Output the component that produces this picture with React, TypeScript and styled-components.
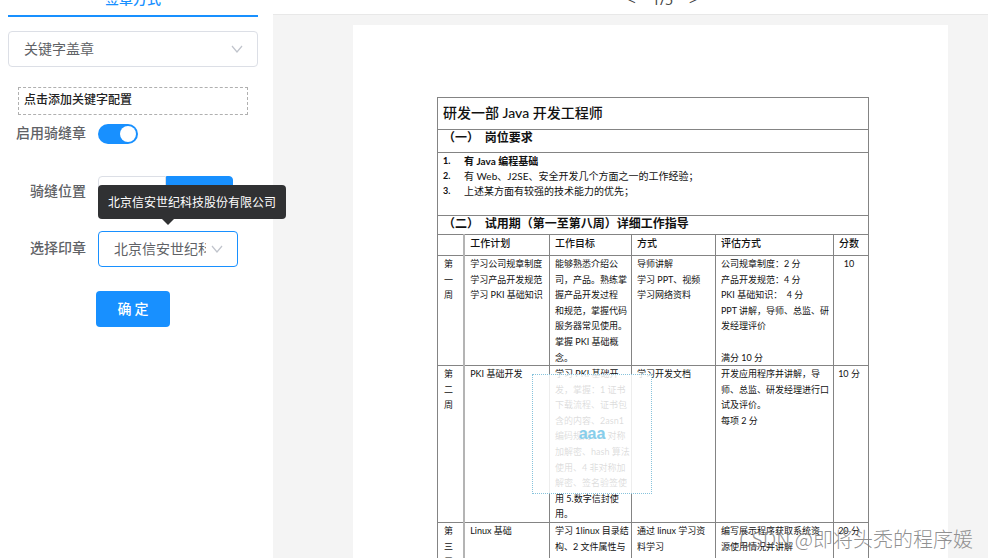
import React from 'react';
import styled, { createGlobalStyle, css } from 'styled-components';

const ui = '"Noto Sans", "Noto Sans CJK SC", sans-serif';
const cjk = '"Noto Sans CJK SC", sans-serif';
const doc = 'Lato, "Noto Sans CJK SC", sans-serif';
const blue = '#1890ff';

const GlobalStyle = createGlobalStyle`
  * { box-sizing: border-box; }
  body { margin: 0; background: #fff; font-family: ${ui}; }
  button, input, select { font-family: inherit; }
`;

const Shell = styled.div`
  position: relative;
  display: flex;
  height: 100vh;
  overflow: hidden;
`;

const Sidebar = styled.aside`
  flex: none;
  width: 273px;
  padding: 0 15px 0 8px;
  font-family: ${cjk};
`;

const TabBar = styled.div`
  display: flex;
  height: 17px;
  align-items: flex-end;
  border-bottom: 2px solid ${blue};
`;

const Tab = styled.button`
  flex: 1;
  height: 26px;
  padding: 0 0 8px;
  border: 0;
  background: none;
  color: ${blue};
  font-size: 14px;
  font-weight: 500;
  line-height: 18px;
`;

const SelectBox = styled.div<{ $active?: boolean }>`
  display: flex;
  align-items: center;
  gap: 5px;
  height: 36px;
  padding: 0 14px 0 15px;
  border: 1px solid ${(p) => (p.$active ? blue : '#dcdfe6')};
  border-radius: 4px;
  background: #fff;
`;

const Select = styled.select`
  flex: 1;
  min-width: 0;
  padding: 0 0 2px;
  border: 0;
  outline: 0;
  appearance: none;
  background: none;
  color: #606266;
  font-size: 14px;
  line-height: 20px;
  overflow: hidden;
  text-overflow: clip;
`;

const Form = styled.form`
  display: flex;
  flex-direction: column;
  padding-top: 14px;
`;

const KeywordButton = styled.button`
  height: 28px;
  margin: 20px 10px 0;
  padding: 0 5px 4px;
  border: 1px dashed #b0b0b0;
  background: #fff;
  color: #222;
  font-size: 12px;
  font-weight: 500;
  line-height: 18px;
  text-align: left;
`;

const Field = styled.div<{ $gap: number }>`
  display: flex;
  align-items: center;
  height: 36px;
  margin-top: ${(p) => p.$gap}px;
`;

const Label = styled.label`
  width: 78px;
  margin-right: 12px;
  padding-bottom: 4px;
  color: #606266;
  font-size: 14px;
  font-weight: 500;
  line-height: 20px;
  text-align: right;
`;

const Switch = styled.input`
  display: flex;
  width: 40px;
  height: 20px;
  margin: 0;
  padding: 2px;
  appearance: none;
  border-radius: 10px;
  background: ${blue};
  &::before {
    content: '';
    width: 16px;
    height: 16px;
    border-radius: 50%;
    background: #fff;
  }
  &:checked { justify-content: flex-end; }
`;

const Segments = styled.div`
  display: flex;
  width: 135px;
  height: 32px;
`;

const Segment = styled.button<{ $on?: boolean }>`
  flex: 1;
  border: 1px solid ${(p) => (p.$on ? blue : '#dcdfe6')};
  border-radius: ${(p) => (p.$on ? '0 4px 4px 0' : '4px 0 0 4px')};
  background: ${(p) => (p.$on ? blue : '#fff')};
`;

const SealPicker = styled.div`
  position: relative;
  width: 140px;
`;

const Tooltip = styled.div`
  position: absolute;
  left: 0;
  bottom: 48px;
  z-index: 5;
  padding: 8px 10px;
  border-radius: 4px;
  background: #303133;
  color: #fff;
  font-size: 12px;
  line-height: 18px;
  white-space: nowrap;
  &::after {
    content: '';
    position: absolute;
    top: 100%;
    left: 64px;
    border: 6px solid transparent;
    border-top-color: #303133;
    border-bottom: 0;
  }
`;

const Confirm = styled.button`
  align-self: flex-start;
  width: 74px;
  height: 36px;
  margin: 24px 0 0 88px;
  padding: 0 0 2px;
  border: 0;
  border-radius: 4px;
  background: ${blue};
  color: #fff;
  font-size: 14px;
  font-weight: 500;
`;

const Viewer = styled.main`
  flex: 1;
  min-width: 0;
  display: flex;
  flex-direction: column;
`;

const Pager = styled.nav`
  flex: none;
  display: flex;
  align-items: flex-end;
  justify-content: center;
  gap: 16px;
  height: 15px;
  padding: 0 0 4px 64px;
  border-bottom: 1px solid #e8e8e8;
  color: #444;
  font-size: 14px;
  line-height: 20px;
`;

const PagerButton = styled.button`
  padding: 0;
  border: 0;
  background: none;
  color: inherit;
  font-size: 14px;
  line-height: 20px;
`;

const Canvas = styled.div`
  flex: 1;
  min-height: 0;
  padding: 10px 40px 0 80px;
  overflow: hidden;
  background: #f4f4f4;
`;

const Paper = styled.article`
  position: relative;
  min-height: 842px;
  padding: 72px 79px 72px 84px;
  background: #fff;
  color: #111;
  font-family: ${doc};
`;

const Sheet = styled.table`
  width: 100%;
  table-layout: fixed;
  border-collapse: collapse;
  font-size: 9px;
`;

const Row = styled.tr<{ $h?: number }>`
  ${(p) => p.$h && css`height: ${p.$h}px;`}
`;

const Cell = styled.td<{ $center?: boolean }>`
  padding: 0 0 0 5px;
  border: 1px solid #848484;
  vertical-align: top;
  white-space: nowrap;
  ${(p) => p.$center && css`padding: 0 4px 0 0; text-align: center;`}
`;

const WeekCell = styled(Cell)`
  padding: 0 4px 0 0;
  border-right: 2px solid #b4b4b4;
  text-align: center;
`;

const HeadCell = styled(Cell).attrs({ as: 'th' })`
  font-size: 10px;
  font-weight: 500;
  line-height: 16px;
  text-align: left;
`;

const Title = styled.h1`
  margin: 0;
  font-size: 14px;
  font-weight: 500;
  line-height: 30px;
`;

const Section = styled.h2`
  margin: 0;
  font-size: 12px;
  font-weight: 700;
  line-height: 15px;
  white-space: pre;
`;

const Lines = styled.div`
  display: grid;
  grid-auto-rows: 16px 15px 16px 15px 16px;
  line-height: 16px;
  white-space: pre;
`;

const Duties = styled.ol`
  display: grid;
  grid-auto-rows: 15px;
  margin: 0;
  padding: 0;
  list-style: none;
  font-size: 10px;
  line-height: 16px;
`;

const Duty = styled.li<{ $strong?: boolean }>`
  display: flex;
  font-weight: ${(p) => (p.$strong ? 700 : 400)};
`;

const Num = styled.b`
  width: 21px;
  font-size: 9px;
`;

const Seal = styled.div`
  position: absolute;
  left: 179px;
  top: 349px;
  display: flex;
  align-items: center;
  justify-content: center;
  width: 120px;
  height: 120px;
  border: 1px dotted #87c3dc;
  background: rgba(255, 255, 255, 0.85);
  color: #87ceeb;
  font: bold 16px "Liberation Sans", sans-serif;
`;

const Watermark = styled.div`
  position: absolute;
  right: 15px;
  bottom: 4px;
  color: rgba(125, 125, 125, 0.85);
  font-family: ${cjk};
  font-size: 20px;
  font-weight: 300;
  line-height: 30px;
`;

const Chevron = () => (
  <svg width="12" height="12" viewBox="0 0 12 12" fill="none" stroke="#c0c4cc" strokeWidth="1.2" aria-hidden="true">
    <path d="M1 3l5 6 5-6" />
  </svg>
);

const TextLines = ({ lines }: { lines: string[] }) => (
  <Lines>
    {lines.map((line, i) => (
      <span key={i}>{line}</span>
    ))}
  </Lines>
);

interface Week {
  week: string;
  plan: string[];
  goal: string[];
  way: string[];
  review: string[];
  score: string;
}

const weeks: Week[] = [
  {
    week: '第一周',
    plan: ['学习公司规章制度', '学习产品开发规范', '学习 PKI 基础知识'],
    goal: ['能够熟悉介绍公', '司，产品。熟练掌', '握产品开发过程', '和规范，掌握代码', '服务器常见使用。', '掌握 PKI 基础概', '念。'],
    way: ['导师讲解', '学习 PPT、视频', '学习网络资料'],
    review: ['公司规章制度：2 分', '产品开发规范：4 分', 'PKI 基础知识：  4 分', 'PPT 讲解，导师、总监、研', '发经理评价', '', '满分 10 分'],
    score: '10',
  },
  {
    week: '第二周',
    plan: ['PKI 基础开发'],
    goal: ['学习 PKI 基础开', '发，掌握：1 证书', '下载流程、证书包', '含的内容、2asn1', '编码规则、3 对称', '加解密、hash 算法', '使用、4 非对称加', '解密、签名验签使', '用 5.数字信封使', '用。'],
    way: ['学习开发文档'],
    review: ['开发应用程序并讲解，导', '师、总监、研发经理进行口', '试及评价。', '每项 2 分'],
    score: '10 分',
  },
  {
    week: '第三周',
    plan: ['Linux 基础'],
    goal: ['学习 1linux 目录结', '构、2 文件属性与'],
    way: ['通过 linux 学习资', '料学习'],
    review: ['编写展示程序获取系统资', '源使用情况并讲解'],
    score: '20 分',
  },
];

export default function App() {
  return (
    <Shell>
      <GlobalStyle />
      <Sidebar>
        <TabBar>
          <Tab type="button">签章方式</Tab>
        </TabBar>
        <Form onSubmit={(e) => e.preventDefault()}>
          <SelectBox>
            <Select aria-label="签章方式">
              <option>关键字盖章</option>
            </Select>
            <Chevron />
          </SelectBox>
          <KeywordButton type="button">点击添加关键字配置</KeywordButton>
          <Field $gap={1}>
            <Label htmlFor="seam">启用骑缝章</Label>
            <Switch id="seam" type="checkbox" role="switch" defaultChecked />
          </Field>
          <Field $gap={22}>
            <Label as="span" id="position">骑缝位置</Label>
            <Segments role="group" aria-labelledby="position">
              <Segment type="button" />
              <Segment type="button" $on />
            </Segments>
          </Field>
          <Field $gap={21}>
            <Label htmlFor="seal">选择印章</Label>
            <SealPicker>
              <SelectBox $active>
                <Select id="seal">
                  <option>北京信安世纪科技股份有限公司</option>
                </Select>
                <Chevron />
              </SelectBox>
              <Tooltip role="tooltip">北京信安世纪科技股份有限公司</Tooltip>
            </SealPicker>
          </Field>
          <Confirm type="submit">确 定</Confirm>
        </Form>
      </Sidebar>
      <Viewer>
        <Pager>
          <PagerButton type="button">&lt;</PagerButton>
          <span>1/5</span>
          <PagerButton type="button">&gt;</PagerButton>
        </Pager>
        <Canvas>
          <Paper>
            <Sheet>
              <colgroup>
                <col style={{ width: '6.2%' }} />
                <col style={{ width: '19.8%' }} />
                <col style={{ width: '19%' }} />
                <col style={{ width: '19.5%' }} />
                <col style={{ width: '27.4%' }} />
                <col />
              </colgroup>
              <tbody>
                <Row $h={32}>
                  <Cell colSpan={6}><Title>研发一部 Java 开发工程师</Title></Cell>
                </Row>
                <Row $h={23}>
                  <Cell colSpan={6}><Section>（一）  岗位要求</Section></Cell>
                </Row>
                <Row $h={63}>
                  <Cell colSpan={6}>
                    <Duties>
                      <Duty $strong><Num>1.</Num>有 Java 编程基础</Duty>
                      <Duty><Num>2.</Num>有 Web、J2SE、安全开发几个方面之一的工作经验；</Duty>
                      <Duty><Num>3.</Num>上述某方面有较强的技术能力的优先；</Duty>
                    </Duties>
                  </Cell>
                </Row>
                <Row $h={19}>
                  <Cell colSpan={6}><Section>（二）  试用期（第一至第八周）详细工作指导</Section></Cell>
                </Row>
                <Row $h={21}>
                  <WeekCell />
                  <HeadCell>工作计划</HeadCell>
                  <HeadCell>工作目标</HeadCell>
                  <HeadCell>方式</HeadCell>
                  <HeadCell>评估方式</HeadCell>
                  <HeadCell>分数</HeadCell>
                </Row>
                {weeks.map((w) => (
                  <Row key={w.week}>
                    <WeekCell><TextLines lines={w.week.split('')} /></WeekCell>
                    <Cell><TextLines lines={w.plan} /></Cell>
                    <Cell><TextLines lines={w.goal} /></Cell>
                    <Cell><TextLines lines={w.way} /></Cell>
                    <Cell><TextLines lines={w.review} /></Cell>
                    <Cell $center><TextLines lines={[w.score]} /></Cell>
                  </Row>
                ))}
              </tbody>
            </Sheet>
            <Seal>aaa</Seal>
          </Paper>
        </Canvas>
      </Viewer>
      <Watermark>CSDN @即将头秃的程序媛</Watermark>
    </Shell>
  );
}
